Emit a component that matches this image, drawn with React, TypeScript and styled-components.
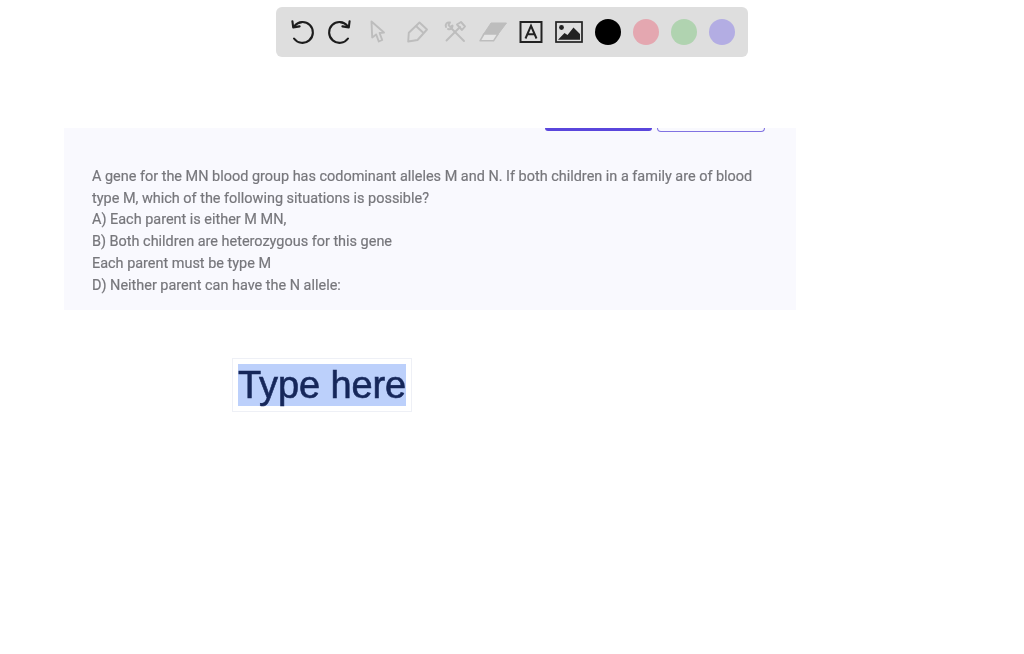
import React from "react";
import styled, { createGlobalStyle } from "styled-components";

const Global = createGlobalStyle`
  html, body { margin: 0; padding: 0; background: #fff; }
  body { width: 1024px; height: 654px; overflow: hidden; font-family: Roboto, "Liberation Sans", sans-serif; }
`;

const Page = styled.div`
  display: flex;
  flex-direction: column;
  width: 1024px;
  height: 654px;
  padding-top: 7px;
  box-sizing: border-box;
`;

const Toolbar = styled.div`
  align-self: flex-start;
  margin-left: 276px;
  width: 472px;
  height: 50px;
  box-sizing: border-box;
  background: #dedede;
  border-radius: 6px;
  display: flex;
  align-items: center;
  padding-left: 7px;
  filter: blur(0.4px);
`;

const Tool = styled.div`
  width: 38.2px;
  height: 30px;
  flex: none;
  display: flex;
  align-items: center;
  justify-content: center;
`;

const Dot = styled.div<{ $color: string }>`
  width: 26px;
  height: 26px;
  flex: none;
  border-radius: 50%;
  background: ${(p) => p.$color};
`;

const Panel = styled.section`
  margin: 71px 0 0 64px;
  width: 732px;
  height: 182px;
  box-sizing: border-box;
  background: #f9f9fe;
  display: flex;
  flex-direction: column;
`;

const ButtonStrip = styled.div`
  display: flex;
  gap: 5px;
  margin-left: 481px;
  height: 3px;
  margin-bottom: 35px;
`;

const FilledEdge = styled.div`
  width: 107px;
  height: 3px;
  background: #5a46dc;
  border-radius: 0 0 3px 3px;
`;

const OutlineEdge = styled.div`
  width: 108px;
  height: 4px;
  box-sizing: border-box;
  border: 1.5px solid #8172e2;
  border-top: none;
  border-radius: 0 0 4px 4px;
`;

const Question = styled.div`
  margin-left: 28px;
  width: 690px;
  font: 400 14.44px/21.7px Roboto, "Liberation Sans", sans-serif;
  color: #77777c;
  -webkit-text-stroke: 0.2px #77777c;
  filter: blur(0.4px);
  white-space: nowrap;
`;

const TypeBox = styled.div`
  margin: 48px 0 0 232px;
  width: 180px;
  height: 54px;
  box-sizing: border-box;
  align-self: flex-start;
  border: 1px solid #eef0f6;
  display: flex;
  align-items: center;
  padding-left: 5px;
`;

const Selected = styled.span`
  font: 400 38px/42px "Liberation Sans", Arial, sans-serif;
  color: #16275a;
  background: #bcd0fb;
  -webkit-text-stroke: 0.6px #16275a;
  filter: blur(0.4px);
  letter-spacing: -0.1px;
  white-space: nowrap;
`;

const Undo = ({ flip }: { flip?: boolean }) => (
  <svg width="26" height="26" viewBox="0 0 26 26" fill="none" stroke="#1c1c1c" strokeWidth="2.1" strokeLinecap="round" strokeLinejoin="round" style={flip ? { transform: "scaleX(-1)" } : undefined}>
    <path d="M5.5 6.8A10.4 10.4 0 1 1 5 19.5" />
    <path d="M3.4 2.2 L4.2 8.4 L10.6 7.4" />
  </svg>
);

const Gray = "#bdbdbd";

const Pointer = () => (
  <svg width="20" height="26" viewBox="0 0 20 26" fill="none" stroke={Gray} strokeWidth="1.9" strokeLinejoin="round">
    <path d="M3.5 2.5 L16 13.5 L11.6 14 L14.2 21 L10.8 22.5 L8.2 15.5 L4.2 18.5 Z" />
  </svg>
);

const Pen = () => (
  <svg width="24" height="24" viewBox="0 0 24 24" fill="none" stroke={Gray} strokeWidth="1.9" strokeLinejoin="round">
    <path d="M14.5 2.5 L22 9.5 L12.5 20 L3.2 21.5 L3.8 12.8 Z" />
    <path d="M11 6 L18.5 13" />
  </svg>
);

const Tools = () => (
  <svg width="24" height="24" viewBox="0 0 24 24" fill="none" stroke={Gray} strokeWidth="1.9" strokeLinecap="round" strokeLinejoin="round">
    <path d="M8 8 L21 21" />
    <path d="M3 7 C2 4 4 2 7 2.5 L5.5 5 L7 6.8 L9.5 5.5 C10 8 8 10 5 9" />
    <path d="M17 7 L3.5 20.5" />
    <path d="M14 4.5 L18 2 L22 6.5 L19 10 Z" />
  </svg>
);

const Eraser = () => (
  <svg width="28" height="20" viewBox="0 0 28 20" strokeLinejoin="round">
    <path d="M12 1 H27.5 L18.5 13 H4 Z" fill={Gray} stroke={Gray} strokeWidth="1" />
    <path d="M5 12 H19 L14.5 18.8 H1 Z" fill="#e6e6e6" stroke={Gray} strokeWidth="1.5" />
  </svg>
);

const TextTool = () => (
  <svg width="24" height="24" viewBox="0 0 24 24" fill="none" stroke="#222">
    <rect x="1.5" y="2" width="21" height="20" strokeWidth="2" />
    <path d="M6.5 18.5 L12 5.8 L17.5 18.5 M8.3 14.2 H15.7" strokeWidth="2" />
  </svg>
);

const ImageTool = () => (
  <svg width="28" height="22" viewBox="0 0 28 22">
    <rect x="1" y="1" width="26" height="20" fill="none" stroke="#222" strokeWidth="1.7" />
    <circle cx="6.5" cy="6.5" r="2.4" fill="#222" />
    <path d="M3 18.8 L9.5 12 L12.5 14 L18.5 6.5 L25 13 V18.8 Z" fill="#222" />
  </svg>
);

export default function App() {
  return (
    <Page>
      <Global />
      <Toolbar>
        <Tool><Undo /></Tool>
        <Tool><Undo flip /></Tool>
        <Tool><Pointer /></Tool>
        <Tool><Pen /></Tool>
        <Tool><Tools /></Tool>
        <Tool><Eraser /></Tool>
        <Tool><TextTool /></Tool>
        <Tool><ImageTool /></Tool>
        <Tool><Dot $color="#000000" /></Tool>
        <Tool><Dot $color="#e4a7b0" /></Tool>
        <Tool><Dot $color="#b0d3b0" /></Tool>
        <Tool><Dot $color="#b3ade3" /></Tool>
      </Toolbar>
      <Panel>
        <ButtonStrip>
          <FilledEdge />
          <OutlineEdge />
        </ButtonStrip>
        <Question>
          A gene for the MN blood group has codominant alleles M and N. If both children in a family are of blood
          <br />
          type M, which of the following situations is possible?
          <br />
          A) Each parent is either M MN,
          <br />
          B) Both children are heterozygous for this gene
          <br />
          Each parent must be type M
          <br />
          D) Neither parent can have the N allele:
        </Question>
      </Panel>
      <TypeBox>
        <Selected>Type here</Selected>
      </TypeBox>
    </Page>
  );
}
